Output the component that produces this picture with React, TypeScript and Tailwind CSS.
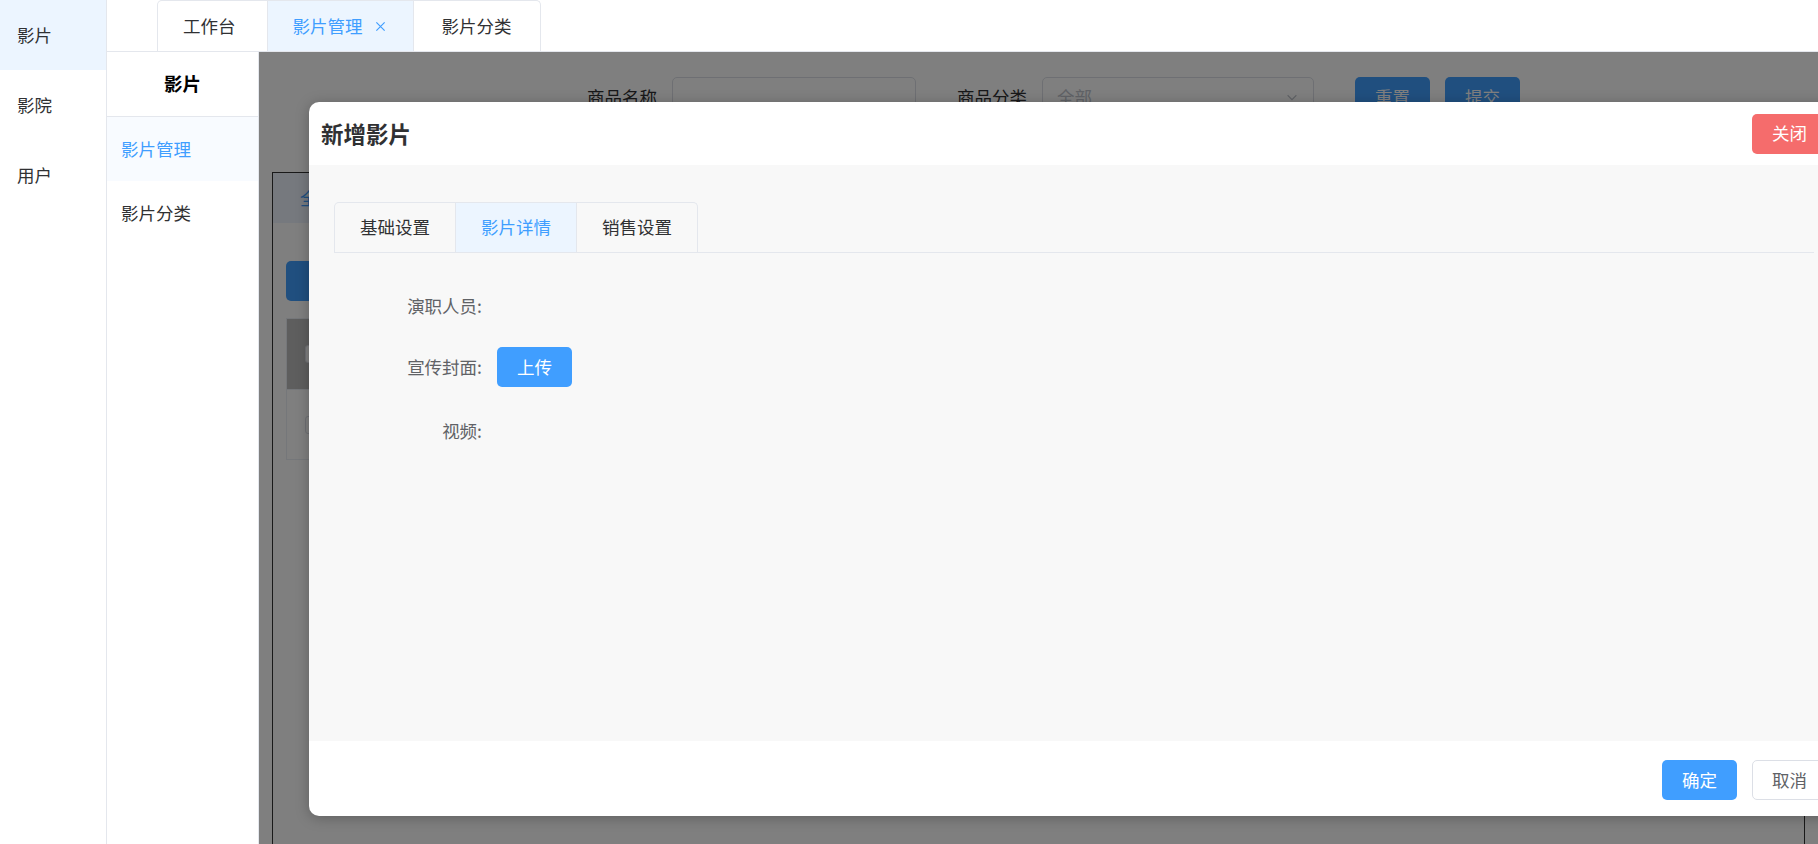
import { useState } from 'react';

const MAIN_MENU = ['影片', '影院', '用户'];
const SUB_MENU = ['影片管理', '影片分类'];
const DIALOG_TABS = ['基础设置', '影片详情', '销售设置'];

const CloseIcon = () => (
  <svg width="11" height="11" viewBox="0 0 12 12" fill="none" stroke="currentColor" strokeWidth="1.3">
    <path d="M1.5 1.5l9 9M10.5 1.5l-9 9" />
  </svg>
);

const ChevronDown = () => (
  <svg width="14" height="14" viewBox="0 0 16 16" fill="none" stroke="currentColor" strokeWidth="1.3">
    <path d="M3 6l5 5 5-5" />
  </svg>
);

const Checkbox = () => (
  <span className="block h-[18px] w-[18px] rounded-[3px] border border-[#dcdfe6] bg-white" />
);

const App = () => {
  const [activeTab, setActiveTab] = useState(1);

  return (
    <div className="flex h-[844px] w-[1818px] overflow-hidden bg-white font-['Noto_Sans_CJK_SC','Noto_Sans',sans-serif] text-[17.5px] text-[#303133]">
      {/* Main menu */}
      <aside className="w-[107px] shrink-0 border-r border-[#e4e7ed]">
        {MAIN_MENU.map((item, i) => (
          <div
            key={item}
            className={`flex h-[70px] items-center pl-[17px] ${i === 0 ? 'bg-[#ecf5ff]' : ''}`}
          >
            {item}
          </div>
        ))}
      </aside>

      <div className="flex min-w-0 flex-1 flex-col">
        {/* Page tabs */}
        <header className="h-[52px] shrink-0 border-b border-[#e4e7ed] pl-[50px]">
          <div className="flex h-[51px] w-fit rounded-t-[5px] border border-b-0 border-[#e4e7ed]">
            <div className="flex items-center pl-[25px] pr-[31px]">工作台</div>
            <div className="flex items-center gap-[12px] border-l border-[#e4e7ed] bg-[#ecf5ff] pl-[25px] pr-[27px] text-[#409eff]">
              影片管理
              <CloseIcon />
            </div>
            <div className="flex items-center border-l border-[#e4e7ed] px-[28px]">影片分类</div>
          </div>
        </header>

        <div className="flex min-h-0 flex-1">
          {/* Sub menu */}
          <aside className="w-[152px] shrink-0 border-r border-[#e4e7ed]">
            <div className="flex h-[65px] items-center justify-center border-b border-[#e4e7ed] text-[18.5px] font-bold text-black">
              影片
            </div>
            {SUB_MENU.map((item, i) => (
              <div
                key={item}
                className={`flex h-[64px] items-center pl-[14px] ${i === 0 ? 'bg-[#f8fbff] text-[#409eff]' : ''}`}
              >
                {item}
              </div>
            ))}
          </aside>

          {/* Content */}
          <main className="relative flex min-w-0 flex-1 flex-col">
            {/* Search */}
            <div className="flex items-center pl-[328px] pt-[25px]">
              <span className="pr-[15px]">商品名称</span>
              <div className="h-[40px] w-[244px] rounded-[5px] border border-[#dcdfe6]" />
              <span className="pl-[41px] pr-[15px]">商品分类</span>
              <div className="flex h-[40px] w-[272px] items-center justify-between rounded-[5px] border border-[#dcdfe6] pl-[14px] pr-[14px] text-[#c0c4cc]">
                全部
                <ChevronDown />
              </div>
              <button className="ml-[41px] h-[40px] w-[75px] rounded-[5px] bg-[#409eff] text-white">重置</button>
              <button className="ml-[15px] h-[40px] w-[75px] rounded-[5px] bg-[#409eff] text-white">提交</button>
            </div>

            {/* List card */}
            <div className="ml-[13px] mr-[13px] mt-[55px] flex flex-1 flex-col border border-b-0 border-[#333]">
              <div className="flex h-[50px] items-center bg-[#ecf3fc] pl-[27px] text-[#409eff]">全部影片</div>
              <div className="px-[13px]">
                <button className="mt-[38px] h-[40px] w-[90px] rounded-[5px] bg-[#409eff] text-white">新增</button>
                <div className="mt-[17px] border border-[#ebeef5]">
                  <div className="flex h-[70px] items-center bg-[#bcbcbc] pl-[18px]">
                    <Checkbox />
                  </div>
                  <div className="flex h-[70px] items-center border-t border-[#ebeef5] pl-[18px]">
                    <Checkbox />
                  </div>
                </div>
              </div>
            </div>

            {/* Dialog */}
            <div className="absolute inset-0 bg-black/50">
              <div className="absolute left-[50px] top-[50px] w-[1530px] overflow-hidden rounded-[10px] bg-white shadow-[0_2px_14px_rgba(0,0,0,0.25)]">
                <div className="flex h-[63px] items-center justify-between px-[12px]">
                  <span className="text-[22.5px] font-bold text-[#303133]">新增影片</span>
                  <button className="h-[40px] w-[75px] rounded-[5px] bg-[#f56c6c] text-white">关闭</button>
                </div>

                <div className="h-[576px] bg-[#f8f8f8] px-[25px] pt-[37px]">
                  <div className="flex border-b border-[#e4e7ed]">
                    <div className="flex rounded-t-[5px] border border-b-0 border-[#e4e7ed]">
                      {DIALOG_TABS.map((tab, i) => (
                        <div
                          key={tab}
                          onClick={() => setActiveTab(i)}
                          className={`flex h-[49px] cursor-pointer items-center px-[25px] ${i > 0 ? 'border-l border-[#e4e7ed]' : ''} ${
                            activeTab === i ? 'bg-[#ecf5ff] text-[#409eff]' : 'text-[#303133]'
                          }`}
                        >
                          {tab}
                        </div>
                      ))}
                    </div>
                  </div>

                  <div className="pt-[33px] text-[#606266]">
                    <div className="flex h-[40px] items-center">
                      <label className="w-[163px] pr-[15px] text-right">演职人员:</label>
                    </div>
                    <div className="mt-[21px] flex h-[40px] items-center">
                      <label className="w-[163px] pr-[15px] text-right">宣传封面:</label>
                      <button className="h-[40px] w-[75px] rounded-[5px] bg-[#409eff] text-white">上传</button>
                    </div>
                    <div className="mt-[24px] flex h-[40px] items-center">
                      <label className="w-[163px] pr-[15px] text-right">视频:</label>
                    </div>
                  </div>
                </div>

                <div className="flex h-[75px] items-center justify-end gap-[15px] pr-[12px] pt-[3px]">
                  <button className="h-[40px] w-[75px] rounded-[5px] bg-[#409eff] text-white">确定</button>
                  <button className="h-[40px] w-[75px] rounded-[5px] border border-[#dcdfe6] bg-white text-[#606266]">取消</button>
                </div>
              </div>
            </div>
          </main>
        </div>
      </div>
    </div>
  );
};

export default App;
